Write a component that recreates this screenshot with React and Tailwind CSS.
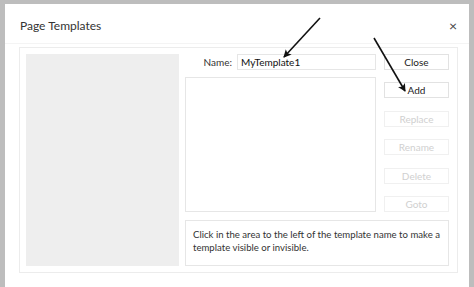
import React from 'react';

const font = { fontFamily: 'Lato, "Open Sans", sans-serif' };

function Btn({ label, disabled }) {
  return (
    <button
      className={`h-[16px] w-[65px] border bg-white text-[10px] leading-none ${
        disabled ? 'border-[#f0f0f0] text-[#d0d0d0]' : 'border-[#e2e2e2] text-[#222]'
      }`}
    >
      {label}
    </button>
  );
}

function Arrows() {
  return (
    <svg className="pointer-events-none absolute left-0 top-0" width="474" height="287">
      <defs>
        <marker id="head" markerWidth="8" markerHeight="8" refX="7" refY="4" orient="auto" markerUnits="userSpaceOnUse">
          <path d="M0,0 L8,4 L0,8 L2,4 Z" fill="#111" />
        </marker>
      </defs>
      <line x1="320" y1="18" x2="284" y2="57" stroke="#111" strokeWidth="1.6" markerEnd="url(#head)" />
      <line x1="374" y1="38" x2="405" y2="91" stroke="#111" strokeWidth="1.6" markerEnd="url(#head)" />
    </svg>
  );
}

export default function App() {
  return (
    <div
      className="relative h-[287px] w-[474px] overflow-hidden border-l-[5px] border-r-[5px] border-t-[4px] border-[#bdbdbd] bg-white"
      style={font}
    >
      <div className="flex h-[40px] items-center justify-between border-b border-[#f4f4f4] pl-[15px] pr-[12px] pt-[4px]">
        <span className="text-[12px] text-[#333]">Page Templates</span>
        <span className="text-[14px] leading-none text-[#444]">×</span>
      </div>
      <div className="ml-[14px] mt-[3px] flex h-[226px] w-[439px] gap-[6px] border border-[#ececec] p-[6px] pb-[5px]">
        <div className="h-[212px] w-[153px] bg-[#eeeeee]" />
        <div className="flex w-[264px] flex-col gap-[8px]">
          <div className="flex gap-[8px]">
            <div className="flex w-[191px] flex-col gap-[7px]">
              <div className="flex h-[16px] items-center">
                <span className="w-[52px] pr-[5px] text-right text-[10px] text-[#333]">Name:</span>
                <div className="flex h-[16px] w-[139px] items-center border border-[#e6e6e6] px-[3px] text-[10px] text-[#111]">
                  MyTemplate1
                </div>
              </div>
              <div className="h-[135px] border border-[#e6e6e6]" />
            </div>
            <div className="flex flex-col gap-[12.4px]">
              <Btn label="Close" />
              <Btn label="Add" />
              <Btn label="Replace" disabled />
              <Btn label="Rename" disabled />
              <Btn label="Delete" disabled />
              <Btn label="Goto" disabled />
            </div>
          </div>
          <div className="h-[46px] border border-[#e6e6e6] pl-[7px] pr-[2px] pt-[7px] text-[9.6px] leading-[13px] text-[#333]">
            Click in the area to the left of the template name to make a template visible or invisible.
          </div>
        </div>
      </div>
      <div className="absolute -left-[5px] -top-[4px]">
        <Arrows />
      </div>
    </div>
  );
}
